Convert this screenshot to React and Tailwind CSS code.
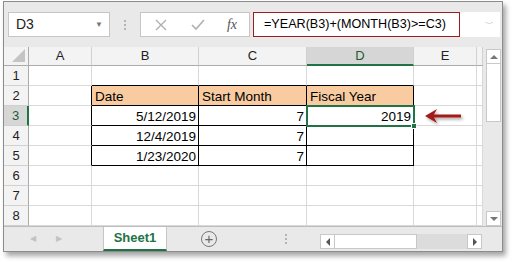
import React from 'react';

const cols = ['A', 'B', 'C', 'D', 'E', ''];
const colWidths = 'grid-cols-[25px_63px_107px_108px_107px_63px_6px]';

// cell contents keyed by "col+row"
const data = {
  B2: { v: 'Date', fill: true },
  C2: { v: 'Start Month', fill: true },
  D2: { v: 'Fiscal Year', fill: true },
  B3: { v: '5/12/2019', right: true },
  C3: { v: '7', right: true },
  D3: { v: '2019', right: true },
  B4: { v: '12/4/2019', right: true },
  C4: { v: '7', right: true },
  B5: { v: '1/23/2020', right: true },
  C5: { v: '7', right: true },
};

const inTable = (c, r) => ['B', 'C', 'D'].includes(c) && r >= 2 && r <= 5;

const Cell = ({ c, r }) => {
  const d = data[c + r];
  const rightBlack = inTable(c, r) || (c === 'A' && r >= 2 && r <= 5);
  const bottomBlack = inTable(c, r) || (['B', 'C', 'D'].includes(c) && r === 1);
  return (
    <div
      className={`border-r border-b overflow-hidden whitespace-nowrap text-[13.5px] leading-[20px] pt-[1px] text-black ${
        rightBlack ? 'border-r-black' : 'border-r-[#d9d9d9]'
      } ${bottomBlack ? 'border-b-black' : 'border-b-[#d9d9d9]'} ${
        d && d.fill ? 'bg-[#f8cba0]' : 'bg-white'
      } ${d && d.right ? 'text-right pr-[2px]' : 'pl-[3px]'}`}
    >
      {d ? d.v : ''}
    </div>
  );
};

const App = () => {
  return (
    <div className="w-[512px] h-[263px] bg-white pt-[1px] pl-[3px]" style={{ fontFamily: '"Liberation Sans", Arial, sans-serif' }}>
      <div className="w-[500px] h-[251px] border border-[#8c8c8c] bg-[#e9e9e9] flex flex-col shadow-[3px_4px_5px_rgba(0,0,0,0.35)]">
        {/* Formula bar */}
        <div className="h-[45px] flex items-start pt-[10px] pl-[4px] shrink-0">
          <div className="w-[102px] h-[25px] bg-white border border-[#c6c6c6] flex items-center justify-between pl-[7px] pr-[6px]">
            <span className="text-[14px] text-[#222]">D3</span>
            <span className="text-[8px] text-[#777]">▼</span>
          </div>
          <div className="w-[30px] h-[25px] flex flex-col items-center justify-center gap-[2px]">
            <span className="w-[2px] h-[2px] bg-[#b4b4b4]"></span>
            <span className="w-[2px] h-[2px] bg-[#b4b4b4]"></span>
            <span className="w-[2px] h-[2px] bg-[#b4b4b4]"></span>
          </div>
          <div className="w-[110px] h-[25px] bg-white border border-[#c6c6c6] grid grid-cols-3 items-center">
            <svg width="12" height="12" viewBox="0 0 12 12" className="justify-self-center ml-[4px]">
              <path d="M1 1 L11 11 M11 1 L1 11" stroke="#b0b0b0" strokeWidth="1.4" />
            </svg>
            <svg width="14" height="12" viewBox="0 0 14 12" className="justify-self-center ml-[6px]">
              <path d="M1 6 L5 10 L13 1" stroke="#b0b0b0" strokeWidth="1.6" fill="none" />
            </svg>
            <span className="justify-self-center italic text-[14px] text-[#555] ml-[2px]" style={{ fontFamily: '"Liberation Serif", serif' }}>
              fx
            </span>
          </div>
          <div className="ml-[3px] w-[247px] h-[25px] bg-white flex items-center">
            <div className="w-[207px] h-[25px] border-[1.5px] border-[#9e1c1c] flex items-center pl-[10px] text-[12.6px] text-black whitespace-nowrap">
              =YEAR(B3)+(MONTH(B3)&gt;=C3)
            </div>
            <span className="ml-auto mr-[6px] text-[9px] text-[#888]">﹀</span>
          </div>
        </div>

        {/* Grid + vertical scrollbar */}
        <div className="flex h-[179px] shrink-0 relative">
          <div className={`grid ${colWidths} grid-rows-[19px_repeat(8,20px)] bg-white`}>
            {/* corner */}
            <div className="bg-[#f3f3f3] border-r border-b border-[#ababab] relative">
              <div className="absolute right-[3px] bottom-[3px] w-0 h-0 border-l-[13px] border-l-transparent border-b-[13px] border-b-[#c4c4c4]"></div>
            </div>
            {cols.map((c) => (
              <div
                key={c || 'f'}
                className={`border-r border-r-[#d0d0d0] flex items-center justify-center text-[13px] ${
                  c === 'D'
                    ? 'bg-[#d6d6d6] border-b-2 border-b-[#217346] text-[#1e5c38]'
                    : 'bg-[#f3f3f3] border-b border-b-[#ababab] text-[#222]'
                }`}
              >
                {c}
              </div>
            ))}
            {[1, 2, 3, 4, 5, 6, 7, 8].map((r) => (
              <React.Fragment key={r}>
                <div
                  className={`border-b border-b-[#d0d0d0] flex items-center justify-center text-[13px] ${
                    r === 3
                      ? 'bg-[#d6d6d6] border-r-2 border-r-[#217346] text-[#1e5c38]'
                      : 'bg-[#f3f3f3] border-r border-r-[#ababab] text-[#222]'
                  }`}
                >
                  {r}
                </div>
                {cols.map((c) =>
                  c ? (
                    <Cell key={c} c={c} r={r} />
                  ) : (
                    <div key="f" className="border-b border-b-[#d9d9d9] bg-white border-r border-r-[#d9d9d9]"></div>
                  )
                )}
              </React.Fragment>
            ))}
          </div>

          {/* selection on D3 */}
          <div className="absolute left-[302px] top-[58px] w-[109px] h-[22px] border-2 border-[#217346] pointer-events-none">
            <div className="absolute -right-[4px] -bottom-[4px] w-[6px] h-[6px] bg-[#217346] border border-white"></div>
          </div>

          {/* arrow */}
          <svg className="absolute left-[419px] top-[60px]" width="42" height="20" viewBox="0 0 42 20">
            <defs>
              <filter id="sh" x="-20%" y="-40%" width="150%" height="200%">
                <feDropShadow dx="1.5" dy="2" stdDeviation="1.5" floodColor="#000" floodOpacity="0.35" />
              </filter>
            </defs>
            <path d="M2 9 L14 2 L11 7.6 L38 7.6 L38 10.4 L11 10.4 L14 16 Z" fill="#a11d1d" filter="url(#sh)" />
          </svg>

          {/* vertical scrollbar */}
          <div className="w-[19px] bg-[#e9e9e9] flex flex-col items-end pr-[1px] pt-[2px] pb-[0px]">
            <div className="w-[15px] h-[15px] bg-white border border-[#c8c8c8] flex items-center justify-center">
              <div className="w-0 h-0 border-l-[4px] border-r-[4px] border-b-[4px] border-l-transparent border-r-transparent border-b-[#777]"></div>
            </div>
            <div className="w-[15px] h-[59px] bg-white border border-[#c8c8c8] mt-[-1px]"></div>
            <div className="w-[15px] h-[15px] bg-white border border-[#c8c8c8] mt-auto flex items-center justify-center">
              <div className="w-0 h-0 border-l-[4px] border-r-[4px] border-t-[4px] border-l-transparent border-r-transparent border-t-[#777]"></div>
            </div>
          </div>
        </div>

        {/* Sheet tabs + horizontal scrollbar */}
        <div className="h-[24px] flex items-start border-t border-[#bdbdbd] bg-[#e9e9e9]">
          <div className="w-[99px] h-full flex items-center pl-[26px] gap-[20px] text-[8px] text-[#c2c2c2]">
            <span>◀</span>
            <span>▶</span>
          </div>
          <div className="w-[64px] h-[24px] bg-white border-l border-r border-[#c6c6c6] border-b-2 border-b-[#217346] flex items-center justify-center font-bold text-[13px] text-[#217346]">
            Sheet1
          </div>
          <div className="w-[84px] h-full flex items-center justify-center">
            <div className="w-[16px] h-[16px] rounded-full border border-[#777] flex items-center justify-center text-[#666] text-[15px] leading-none">
              +
            </div>
          </div>
          <div className="w-[69px] h-full flex flex-col items-center justify-center gap-[2px]">
            <span className="w-[2px] h-[2px] bg-[#b4b4b4]"></span>
            <span className="w-[2px] h-[2px] bg-[#b4b4b4]"></span>
            <span className="w-[2px] h-[2px] bg-[#b4b4b4]"></span>
          </div>
          <div className="flex items-center mt-[7px] h-[15px]">
            <div className="w-[15px] h-[15px] bg-white border border-[#c8c8c8] flex items-center justify-center">
              <div className="w-0 h-0 border-t-[4px] border-b-[4px] border-r-[4px] border-t-transparent border-b-transparent border-r-[#555]"></div>
            </div>
            <div className="w-[83px] h-[15px] bg-white border border-[#c8c8c8] ml-[-1px]"></div>
            <div className="w-[50px] h-[15px] bg-[#dcdcdc]"></div>
            <div className="w-[15px] h-[15px] bg-white border border-[#c8c8c8] flex items-center justify-center">
              <div className="w-0 h-0 border-t-[4px] border-b-[4px] border-l-[4px] border-t-transparent border-b-transparent border-l-[#555]"></div>
            </div>
          </div>
        </div>
      </div>
    </div>
  );
};

export default App;
